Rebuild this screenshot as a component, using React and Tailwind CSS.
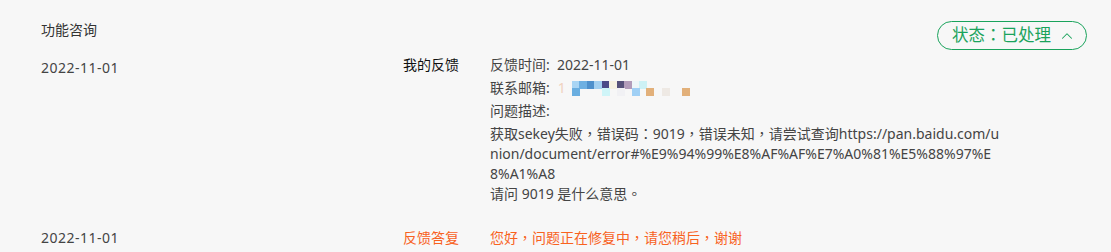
import { ChevronUp } from 'lucide-react';

const font = { fontFamily: '"Noto Sans", "Noto Sans CJK SC", sans-serif' };
// centred full-width punctuation like the screenshot
const tc = { fontFamily: '"Noto Sans", "Noto Sans CJK TC", sans-serif' };

// pixelated email (the screenshot blurs it)
function Mosaic() {
  const cells = [
    [0, 0, '#a9d5f4'], [7, 0, '#6eb0e2'], [15, 0, '#4e90cc'], [22, 0, '#a3d0f1'],
    [30, 0, '#4b4a88'], [37, 0, '#f6f1e2'], [45, 0, '#56517a'], [52, 0, '#b29cba'],
    [60, 0, '#eef6f8'], [67, 0, '#cdf1f5'],
    [0, 7, '#6aaee0'], [30, 7, '#cff5f8'], [60, 7, '#a0d0f5'], [74, 7, '#e2b07a'],
    [45, 7, '#f1f1f4'], [90, 7, '#eee9e4'], [110, 7, '#e2b07a'],
  ];
  return (
    <svg width="120" height="15" viewBox="0 0 120 15" className="inline-block align-middle">
      {cells.map(([x, y, c], i) => (
        <rect key={i} x={x} y={y} width="8" height="8" fill={c} />
      ))}
    </svg>
  );
}

function App() {
  return (
    <div className="min-h-[252px] bg-[#f7f7f7] pl-[41px] pr-[24px] pt-[20px] text-[14px] text-[#444]" style={font}>
      <div className="flex items-start justify-between">
        <div className="leading-[20px] text-[#333]">功能咨询</div>
        <button
          className="mt-[1px] flex h-[29px] w-[150px] items-center justify-center gap-[7px] rounded-full border border-[#1aa35c] pl-[4px] text-[16.5px] text-[#1aa35c]"
          style={tc}
        >
          <span>状态：已处理</span>
          <ChevronUp size={18} strokeWidth={1.4} />
        </button>
      </div>

      <div className="mt-[5px] flex leading-[20px]">
        <div className="w-[362px] pt-[3px] tracking-[0.5px]">2022-11-01</div>
        <div className="w-[87px] text-[#111]">我的反馈</div>
        <div className="flex flex-col gap-[3px]">
          <div>反馈时间:&nbsp; 2022-11-01</div>
          <div className="flex items-center">
            <span>联系邮箱:</span>
            <span className="ml-[8px] mr-[6px] text-[#f0d2bf]">1</span>
            <Mosaic />
          </div>
          <div>问题描述:</div>
          <div className="flex flex-col" style={tc}>
            <span>获取sekey失败，错误码：9019，错误未知，请尝试查询https://pan.baidu.com/u</span>
            <span>nion/document/error#%E9%94%99%E8%AF%AF%E7%A0%81%E5%88%97%E</span>
            <span>8%A1%A8</span>
            <span>请问 9019 是什么意思。</span>
          </div>
        </div>
      </div>

      <div className="mt-[24px] flex leading-[20px]">
        <div className="w-[362px] tracking-[0.5px]">2022-11-01</div>
        <div className="w-[87px] text-[#f8621e]">反馈答复</div>
        <div className="text-[#f8621e]" style={tc}>您好，问题正在修复中，请您稍后，谢谢</div>
      </div>
    </div>
  );
}

export default App;
